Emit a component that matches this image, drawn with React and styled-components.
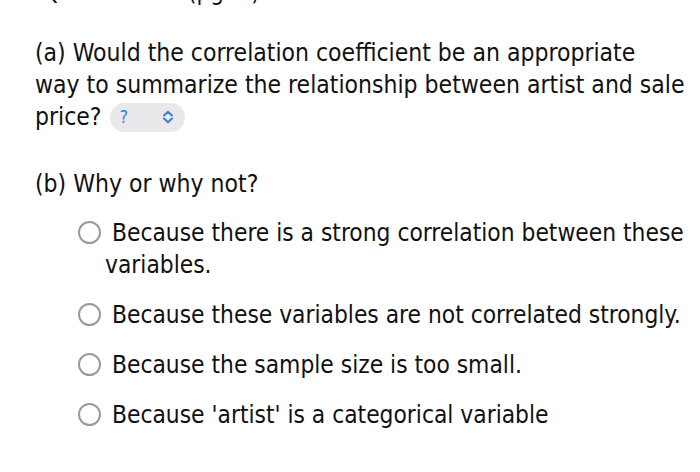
import React from 'react'
import styled, { createGlobalStyle } from 'styled-components'

const GlobalStyle = createGlobalStyle`
  html, body {
    margin: 0;
    padding: 0;
    background: #ffffff;
  }
  body {
    font-family: "DejaVu Sans Condensed", "DejaVu Sans", sans-serif;
    color: #111111;
    overflow: hidden;
  }
`

const Page = styled.div`
  width: 700px;
  height: 472px;
  padding: 0 0 0 35px;
  box-sizing: border-box;
  overflow: hidden;
`

// the previous question's heading, scrolled mostly out of view
const CutLine = styled.div`
  margin-top: -22px;
  height: 28px;
  font-size: 24px;
  line-height: 28px;
  display: flex;
  gap: 128px;
  padding-left: 8px;
`

const Question = styled.p`
  margin: 31px 0 0;
  font-size: 24.5px;
  line-height: 32px;
  width: 650px;
`

const Picker = styled.span`
  display: inline-flex;
  align-items: center;
  justify-content: space-between;
  width: 75px;
  height: 29px;
  box-sizing: border-box;
  padding: 0 11px 0 10px;
  margin-left: 8px;
  border-radius: 15px;
  background: #e9e9eb;
  vertical-align: 2px;
  color: #3b7fde;
  font-family: "DejaVu Sans Condensed", sans-serif;
  font-size: 18px;
`

const SubHeading = styled.p`
  margin: 35px 0 0;
  font-size: 24.5px;
  line-height: 32px;
`

const Options = styled.div`
  display: flex;
  flex-direction: column;
  gap: 18px;
  margin-top: 17px;
`

const Option = styled.label`
  display: block;
  padding-left: 70px;
  text-indent: -27px;
  font-size: 24.3px;
  line-height: 32px;
  width: 590px;
`

const Radio = styled.span`
  display: inline-block;
  width: 23px;
  height: 23px;
  box-sizing: border-box;
  border: 2px solid #9a9a9a;
  border-radius: 50%;
  margin-right: 11px;
  vertical-align: -3px;
  text-indent: 0;
`

const Chevrons = () => (
  <svg width="12" height="14" viewBox="0 0 12 14" fill="none" stroke="#3b7fde" strokeWidth="2" strokeLinecap="round" strokeLinejoin="round">
    <path d="M2 5.5 L6 1.8 L10 5.5" />
    <path d="M2 8.5 L6 12.2 L10 8.5" />
  </svg>
)

const choices = [
  'Because there is a strong correlation between these variables.',
  'Because these variables are not correlated strongly.',
  'Because the sample size is too small.',
  "Because 'artist' is a categorical variable",
]

export default function App() {
  return (
    <Page>
      <GlobalStyle />
      <CutLine>
        <span>Q</span>
        <span>(pg. 4)</span>
      </CutLine>
      <Question>
        (a) Would the correlation coefficient be an appropriate way to summarize the relationship between artist and sale price?
        <Picker>
          <span>?</span>
          <Chevrons />
        </Picker>
      </Question>
      <SubHeading>(b) Why or why not?</SubHeading>
      <Options>
        {choices.map((c) => (
          <Option key={c}>
            <Radio />
            {c}
          </Option>
        ))}
      </Options>
    </Page>
  )
}
